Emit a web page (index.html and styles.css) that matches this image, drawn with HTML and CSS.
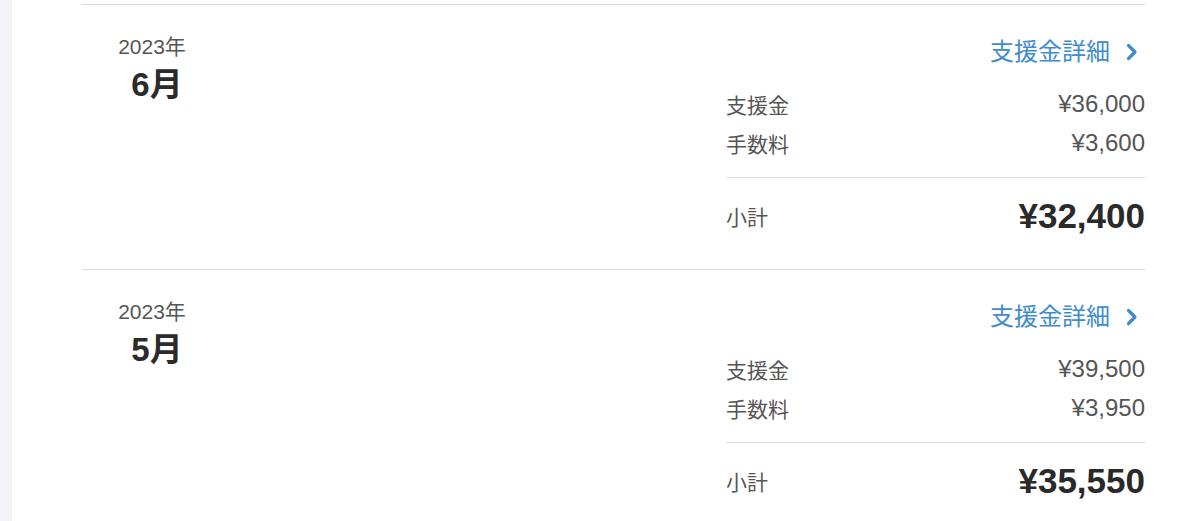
FILE: index.html
```html
<!DOCTYPE html>
<html lang="ja">
<head>
<meta charset="utf-8">
<title>支援金履歴</title>
<link rel="stylesheet" href="styles.css">
</head>
<body>
<div class="page">
  <div class="side"></div>
  <main class="list">
    <section class="entry">
      <div class="date">
        <div class="year">2023年</div>
        <div class="month">6月</div>
      </div>
      <div class="summary">
        <a class="detail" href="#">支援金詳細<svg class="chev" width="12" height="18" viewBox="0 0 12 18"><path d="M2.5 2.5 L9 9 L2.5 15.5" fill="none" stroke="currentColor" stroke-width="3.2" stroke-linecap="round" stroke-linejoin="round"/></svg></a>
        <div class="rows">
          <div class="row"><span class="label">支援金</span><span class="amount">¥36,000</span></div>
          <div class="row"><span class="label">手数料</span><span class="amount">¥3,600</span></div>
        </div>
        <div class="total"><span class="label">小計</span><span class="sum">¥32,400</span></div>
      </div>
    </section>
    <section class="entry">
      <div class="date">
        <div class="year">2023年</div>
        <div class="month">5月</div>
      </div>
      <div class="summary">
        <a class="detail" href="#">支援金詳細<svg class="chev" width="12" height="18" viewBox="0 0 12 18"><path d="M2.5 2.5 L9 9 L2.5 15.5" fill="none" stroke="currentColor" stroke-width="3.2" stroke-linecap="round" stroke-linejoin="round"/></svg></a>
        <div class="rows">
          <div class="row"><span class="label">支援金</span><span class="amount">¥39,500</span></div>
          <div class="row"><span class="label">手数料</span><span class="amount">¥3,950</span></div>
        </div>
        <div class="total"><span class="label">小計</span><span class="sum">¥35,550</span></div>
      </div>
    </section>
  </main>
</div>
</body>
</html>
```

FILE: styles.css
```css
* { box-sizing: border-box; }
html, body { margin: 0; padding: 0; background: #fff; }
body {
  font-family: "Liberation Sans", "Noto Sans CJK JP", sans-serif;
  color: #555;
  height: 521px;
  overflow: hidden;
}
.page { display: flex; min-height: 521px; }
.side { width: 12px; flex: 0 0 12px; background: #f2f2f7; }
.list { flex: 1; padding: 4px 55px 0 70px; }
.entry {
  display: flex;
  border-top: 1px solid #d9d9de;
  height: 265px;
}
.date { width: 140px; text-align: center; padding-top: 30px; }
.year { font-size: 21px; line-height: 24px; color: #555; }
.month { font-size: 33px; line-height: 40px; font-weight: 700; color: #2b2b2b; margin-top: 6px; padding-left: 10px; }
.summary { width: 419px; margin-left: auto; padding-top: 32px; }
.detail {
  display: flex; justify-content: flex-end; align-items: center; gap: 16px;
  font-size: 24px; line-height: 30px; color: #3f8bcf; text-decoration: none;
  padding-right: 7px;
}
.chev { display: block; color: #3f8bcf; }
.rows { margin-top: 17px; padding-bottom: 15px; border-bottom: 1px solid #d9d9de; }
.row { display: flex; justify-content: space-between; align-items: center; height: 39px; }
.label { font-size: 21px; color: #555; }
.amount { font-size: 24px; color: #555; }
.total { display: flex; justify-content: space-between; align-items: center; height: 40px; margin-top: 18px; }
.sum { font-size: 35px; font-weight: 700; color: #2a2a2a; }
```
